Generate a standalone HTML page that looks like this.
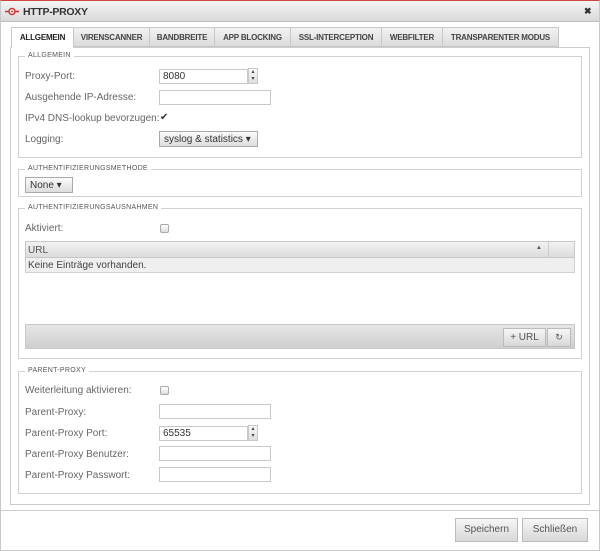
<!DOCTYPE html>
<html><head><style>
*{box-sizing:border-box;margin:0;padding:0}
body{width:600px;height:551px;background:#fff;font-family:"Liberation Sans",sans-serif;font-size:10px;color:#444;position:relative;overflow:hidden}
.a{position:absolute}
.win{left:0;top:0;width:600px;height:551px;border:1px solid #c8c8c8;border-top:1px solid #c44}
.title{left:1px;top:1px;width:598px;height:21px;background:linear-gradient(#f4f4f4,#d9d9d9);border-bottom:1px solid #bbb;font-weight:bold;font-size:10.5px;letter-spacing:-0.3px;color:#333;padding:5px 0 0 22px}
.tab{top:27px;height:20px;border:1px solid #c8c8c8;background:linear-gradient(#f2f2f2,#dcdcdc);font-weight:bold;font-size:8px;color:#444;text-align:center;line-height:19px;letter-spacing:-0.2px}
.panel{left:10px;top:47px;width:580px;height:458px;border:1px solid #ccc}
.fs{border:1px solid #d0d0d0}
.lg{background:#fff;font-size:7px;color:#555;padding:0 3px;letter-spacing:.3px}
.lb{font-size:10px;color:#666}
.in{border:1px solid #c8c8c8;height:15px;background:#fff;font-size:10px;padding:1px 3px;color:#333}
.sp{border:1px solid #c8c8c8;width:10px;height:16px;background:linear-gradient(#fafafa,#ddd);font-size:6px;line-height:7px;text-align:center}
.cb{width:9px;height:9px;border:1px solid #aaa;border-radius:2px;background:linear-gradient(#fff,#ddd)}
.sel{border:1px solid #aaa;background:linear-gradient(#fafafa,#ddd);font-size:10px;padding:2px 4px;color:#333}
.btn{border:1px solid #bbb;background:linear-gradient(#f6f6f6,#d8d8d8);font-size:10px;color:#555;text-align:center}
</style></head><body>
<div class="a win"></div>
<div class="a title">HTTP-PROXY</div>
<svg class="a" style="left:5px;top:7px" width="14" height="9"><line x1="0" y1="4.5" x2="14" y2="4.5" stroke="#c33" stroke-width="1.5"/><circle cx="7" cy="4.5" r="3" fill="#fff" stroke="#c33" stroke-width="1.5"/><circle cx="7" cy="4.5" r="1" fill="#c33"/></svg>
<div class="a" style="left:584px;top:6px;font-size:9px;font-weight:bold;color:#333">✖</div>

<div class="a panel"></div>
<div class="a tab" style="left:11px;width:63px;background:#fff;border-bottom-color:#fff;height:21px;color:#222">ALLGEMEIN</div>
<div class="a tab" style="left:73px;width:77px">VIRENSCANNER</div>
<div class="a tab" style="left:149px;width:66px">BANDBREITE</div>
<div class="a tab" style="left:214px;width:77px">APP BLOCKING</div>
<div class="a tab" style="left:290px;width:92px">SSL-INTERCEPTION</div>
<div class="a tab" style="left:381px;width:62px">WEBFILTER</div>
<div class="a tab" style="left:442px;width:117px">TRANSPARENTER MODUS</div>

<div class="a fs" style="left:18px;top:56px;width:564px;height:102px"></div>
<div class="a lg" style="left:25px;top:52px">ALLGEMEIN</div>
<div class="a lb" style="left:25px;top:71px">Proxy-Port:</div>
<div class="a in" style="left:159px;top:69px;width:89px">8080</div>
<div class="a sp" style="left:248px;top:68px">▴<br>▾</div>
<div class="a lb" style="left:25px;top:92px">Ausgehende IP-Adresse:</div>
<div class="a in" style="left:159px;top:90px;width:112px"></div>
<div class="a lb" style="left:25px;top:113px">IPv4 DNS-lookup bevorzugen:</div>
<div class="a" style="left:160px;top:112px;font-size:10px;color:#333">✔</div>
<div class="a lb" style="left:25px;top:134px">Logging:</div>
<div class="a sel" style="left:159px;top:131px;width:99px;height:16px">syslog &amp; statistics ▾</div>

<div class="a fs" style="left:18px;top:169px;width:564px;height:28px"></div>
<div class="a lg" style="left:25px;top:165px">AUTHENTIFIZIERUNGSMETHODE</div>
<div class="a sel" style="left:25px;top:177px;width:48px;height:16px">None ▾</div>

<div class="a fs" style="left:18px;top:208px;width:564px;height:151px"></div>
<div class="a lg" style="left:25px;top:204px">AUTHENTIFIZIERUNGSAUSNAHMEN</div>
<div class="a lb" style="left:25px;top:223px">Aktiviert:</div>
<div class="a cb" style="left:160px;top:224px"></div>
<div class="a" style="left:25px;top:241px;width:550px;height:17px;border:1px solid #c8c8c8;background:linear-gradient(#f2f2f2,#dcdcdc);padding:3px 2px;color:#555">URL<span class="a" style="left:510px;top:3px;font-size:6px">▲</span><span class="a" style="left:522px;top:0;width:1px;height:16px;background:#ccc"></span></div>
<div class="a" style="left:25px;top:258px;width:550px;height:15px;border:1px solid #d0d0d0;border-top:0;background:#efefef;padding:2px 2px;color:#444">Keine Einträge vorhanden.</div>
<div class="a" style="left:25px;top:324px;width:550px;height:25px;border:1px solid #c8c8c8;background:linear-gradient(#e6e6e6,#cfcfcf)"></div>
<div class="a btn" style="left:503px;top:328px;width:43px;height:19px;line-height:17px">+ URL</div>
<div class="a btn" style="left:547px;top:328px;width:24px;height:19px;line-height:17px;font-size:9px">↻</div>

<div class="a fs" style="left:18px;top:371px;width:564px;height:123px"></div>
<div class="a lg" style="left:25px;top:367px">PARENT-PROXY</div>
<div class="a lb" style="left:25px;top:385px">Weiterleitung aktivieren:</div>
<div class="a cb" style="left:160px;top:386px"></div>
<div class="a lb" style="left:25px;top:407px">Parent-Proxy:</div>
<div class="a in" style="left:159px;top:404px;width:112px"></div>
<div class="a lb" style="left:25px;top:428px">Parent-Proxy Port:</div>
<div class="a in" style="left:159px;top:426px;width:89px">65535</div>
<div class="a sp" style="left:248px;top:425px">▴<br>▾</div>
<div class="a lb" style="left:25px;top:449px">Parent-Proxy Benutzer:</div>
<div class="a in" style="left:159px;top:446px;width:112px"></div>
<div class="a lb" style="left:25px;top:470px">Parent-Proxy Passwort:</div>
<div class="a in" style="left:159px;top:467px;width:112px"></div>

<div class="a" style="left:1px;top:510px;width:598px;height:1px;background:#ccc"></div>
<div class="a btn" style="left:455px;top:518px;width:63px;height:24px;line-height:22px">Speichern</div>
<div class="a btn" style="left:522px;top:518px;width:66px;height:24px;line-height:22px">Schließen</div>
</body></html>
